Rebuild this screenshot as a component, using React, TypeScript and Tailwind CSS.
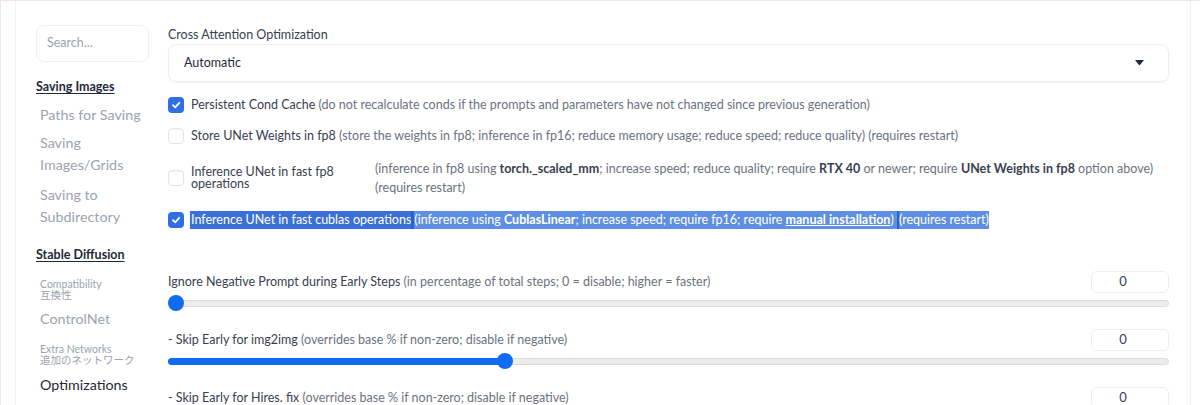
import React from "react";

const font = { fontFamily: "Lato, 'Noto Sans CJK JP', sans-serif" };

function Check({ checked }: { checked: boolean }) {
  if (checked) {
    return (
      <div className="w-4 h-4 rounded-[4px] bg-[#2f6ee3] flex items-center justify-center shrink-0">
        <svg width="10" height="10" viewBox="0 0 10 10">
          <path d="M2 5.2 L4.2 7.3 L8.2 2.8" stroke="white" strokeWidth="1.8" fill="none" strokeLinecap="round" strokeLinejoin="round" />
        </svg>
      </div>
    );
  }
  return <div className="w-4 h-4 rounded-[4px] border border-[#e3e4e8] bg-white shadow-[inset_0_1px_1px_rgba(0,0,0,0.04)] shrink-0" />;
}

function Slider({ label, desc, pct }: { label: string; desc: string; pct: number }) {
  return (
    <div className="flex flex-col">
      <div className="flex items-center justify-between h-[22px]">
        <div className="text-[12.5px] text-[#374151]">
          {label} <span className="text-[#6b7280]">{desc}</span>
        </div>
        <div className="w-[78px] h-[22px] rounded-md border border-[#eceef1] bg-white flex items-center justify-center pr-[14px] text-[13px] text-[#374151]">
          0
        </div>
      </div>
      <div className="relative h-[16px] mt-[2px] flex items-center">
        <div className="w-full h-[7px] rounded-full bg-[#ececec] border border-[#dcdcdc]" />
        <div className="absolute left-0 h-[7px] rounded-full bg-[#0f6cf2]" style={{ width: `${pct}%` }} />
        <div
          className="absolute w-4 h-4 rounded-full bg-[#0f6cf2] -translate-x-1/2"
          style={{ left: `calc(${pct}% + ${pct === 0 ? 8 : 0}px)` }}
        />
      </div>
    </div>
  );
}

export default function App() {
  return (
    <div className="w-[1200px] h-[405px] overflow-hidden bg-white border-t border-l border-[#f3e3ea] flex" style={font}>
      <div className="w-[14px] shrink-0" />
      <div className="w-[1176px] shrink-0 border-l border-r border-[#f1f1f1] flex">
        {/* Sidebar */}
        <div className="w-[152px] shrink-0 pl-[20px] pt-[24px]">
          <div className="w-[113px] h-[37px] rounded-lg border border-[#eef0f2] flex items-center pl-[10px] text-[12.5px] text-[#9ca3af]">
            Search...
          </div>
          <div className="mt-[16px] text-[12.5px] font-bold text-[#1f2937] underline underline-offset-2 leading-[18px]">Saving Images</div>
          <div className="pl-[4px] text-[14.3px] text-[#9ca3af] leading-[22px]">
            <div className="mt-[8px]">Paths for Saving</div>
            <div className="mt-[6px]">Saving<br />Images/Grids</div>
            <div className="mt-[8px]">Saving to<br />Subdirectory</div>
          </div>
          <div className="mt-[18px] text-[12.5px] font-bold text-[#1f2937] underline underline-offset-2 leading-[18px]">Stable Diffusion</div>
          <div className="pl-[4px] text-[#9ca3af]">
            <div className="mt-[15px] text-[10.5px] leading-[11px]">Compatibility<br />互換性</div>
            <div className="mt-[7px] text-[14.3px] leading-[22px]">ControlNet</div>
            <div className="mt-[14px] text-[10.5px] leading-[11px]">Extra Networks<br />追加のネットワーク</div>
            <div className="mt-[8px] text-[14.3px] leading-[22px] text-[#1f2937]">Optimizations</div>
          </div>
        </div>
        {/* Main */}
        <div className="w-[1001px] shrink-0 pt-[25px]">
          <div className="text-[12.5px] text-[#374151] leading-[18px]">Cross Attention Optimization</div>
          <div className="h-[38px] rounded-lg border border-[#eceef1] shadow-[0_1px_2px_rgba(0,0,0,0.04)] flex items-center justify-between pl-[15px] pr-[24px] text-[12.5px] text-[#1f2937]">
            <span>Automatic</span>
            <svg width="9" height="6" viewBox="0 0 9 6">
              <path d="M0 0 H9 L4.5 5.5 Z" fill="#1f2937" />
            </svg>
          </div>

          <div className="mt-[15px] flex items-center gap-[7px] h-[16px]">
            <Check checked />
            <div className="text-[12.5px] text-[#374151] whitespace-nowrap">
              Persistent Cond Cache <span className="text-[#6b7280]">(do not recalculate conds if the prompts and parameters have not changed since previous generation)</span>
            </div>
          </div>

          <div className="mt-[15px] flex items-center gap-[7px] h-[16px]">
            <Check checked={false} />
            <div className="text-[12.5px] text-[#374151] whitespace-nowrap">
              Store UNet Weights in fp8 <span className="text-[#6b7280]">(store the weights in fp8; inference in fp16; reduce memory usage; reduce speed; reduce quality) (requires restart)</span>
            </div>
          </div>

          <div className="mt-[15px] flex items-center">
            <Check checked={false} />
            <div className="ml-[7px] w-[176px] text-[12.5px] text-[#374151] leading-[12px]">Inference UNet in fast fp8 operations</div>
            <div className="ml-[8px] text-[12.5px] text-[#6b7280] leading-[19px]">
              <div className="whitespace-nowrap">
                (inference in fp8 using <b className="text-[#374151]">torch._scaled_mm</b>; increase speed; reduce quality; require <b className="text-[#374151]">RTX 40</b> or newer; require <b className="text-[#374151]">UNet Weights in fp8</b> option above)
              </div>
              <div>(requires restart)</div>
            </div>
          </div>

          <div className="mt-[14px] flex items-center gap-[6px] h-[18px]">
            <Check checked />
            <div className="text-[12.5px] text-white whitespace-nowrap leading-[18px] flex">
              <span className="bg-[#3b70d9] pl-[1px]">Inference UNet in fast cublas operations</span>
              <span className="bg-[#2c5fd0] w-[3px]" />
              <span className="bg-[#5e8fe2]">
                (inference using <b>CublasLinear</b>; increase speed; require fp16; require <b className="underline">manual installation</b>) <span className="inline-block w-[2px] h-[18px] align-top bg-[#2c5fd0]" />(requires restart)
              </span>
            </div>
          </div>

          <div className="mt-[42px] flex flex-col gap-[18px]">
            <Slider label="Ignore Negative Prompt during Early Steps" desc="(in percentage of total steps; 0 = disable; higher = faster)" pct={0} />
            <Slider label="- Skip Early for img2img" desc="(overrides base % if non-zero; disable if negative)" pct={33.7} />
            <Slider label="- Skip Early for Hires. fix" desc="(overrides base % if non-zero; disable if negative)" pct={0} />
          </div>
        </div>
      </div>
    </div>
  );
}
